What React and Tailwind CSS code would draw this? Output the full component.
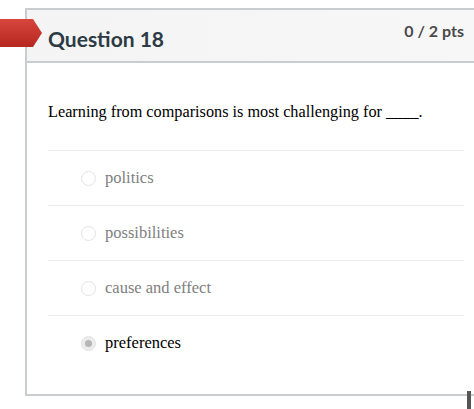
import React from 'react';

const answers = [
  { id: 'a1', text: 'politics', selected: false },
  { id: 'a2', text: 'possibilities', selected: false },
  { id: 'a3', text: 'cause and effect', selected: false },
  { id: 'a4', text: 'preferences', selected: true },
];

function Radio({ checked }) {
  return (
    <span
      className={
        'flex h-[15px] w-[15px] shrink-0 items-center justify-center rounded-full border ' +
        (checked ? 'border-[#e2e2e2] bg-[#ececec]' : 'border-[#e3e3e3] bg-white')
      }
    >
      {checked && <span className="h-[7px] w-[7px] rounded-full bg-[#b5b5b5]" />}
    </span>
  );
}

export default function App() {
  return (
    <div className="relative h-[409px] w-[474px] overflow-hidden bg-white">
      <div className="ml-[25px] mt-[8px] w-[460px] border-b-2 border-l-2 border-t-2 border-[#c9cdd0]">
        {/* header */}
        <div
          className="relative flex h-[53px] items-start justify-between border-b-2 border-[#c9cdd0] bg-gradient-to-r from-[#f4f4f4] to-[#f7f7f7] pl-[21px] pr-[21px]"
          style={{ fontFamily: 'Lato, "Noto Sans", sans-serif' }}
        >
          <h2 className="mt-[15px] text-[21px] font-bold leading-[28px] text-[#2d3b45]">Question 18</h2>
          <span className="mt-[11px] text-[16px] font-bold leading-[20px] text-[#4a4a4a]">0 / 2 pts</span>
        </div>

        {/* body */}
        <div className="px-[21px] pb-[24px]" style={{ fontFamily: '"Liberation Serif", serif' }}>
          <p className="mb-[26px] mt-[37px] text-[16.25px] leading-[24px] text-black">
            Learning from comparisons is most challenging for ____.
          </p>
          <div>
            {answers.map((a) => (
              <div key={a.id} className="flex h-[55px] items-center border-t border-[#ececec] pl-[33px]">
                <Radio checked={a.selected} />
                <span className={'ml-[9px] text-[16.5px] ' + (a.selected ? 'text-black' : 'text-[#808080]')}>
                  {a.text}
                </span>
              </div>
            ))}
          </div>
        </div>
      </div>

      {/* red flag */}
      <svg className="absolute left-0 top-[19px]" width="43" height="28" viewBox="0 0 43 28">
        <defs>
          <linearGradient id="flag" x1="0" y1="0" x2="0" y2="1">
            <stop offset="0" stopColor="#d8463d" />
            <stop offset="1" stopColor="#b5271f" />
          </linearGradient>
        </defs>
        <polygon points="0,0 33,0 42,14 33,28 0,28" fill="url(#flag)" />
      </svg>

      {/* dark mark at bottom right */}
      <div className="absolute left-[467px] top-[391px] h-[18px] w-[4px] bg-[#555]" />
    </div>
  );
}
